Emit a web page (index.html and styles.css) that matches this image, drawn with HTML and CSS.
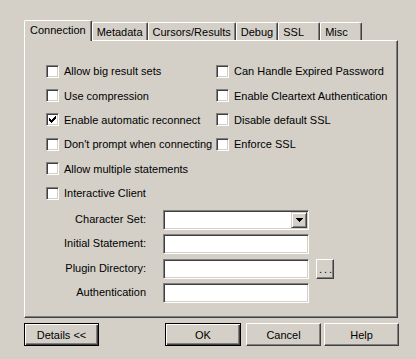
FILE: index.html
```html
<!DOCTYPE html>
<html lang="en">
<head>
  <meta charset="UTF-8">
  <title>Connection Options</title>
  <link rel="stylesheet" href="styles.css">
</head>
<body>
  <div class="dialog">
    <div class="tabs">
      <div class="tab active">Connection</div>
      <div class="tab">Metadata</div>
      <div class="tab">Cursors/Results</div>
      <div class="tab">Debug</div>
      <div class="tab">SSL</div>
      <div class="tab">Misc</div>
    </div>

    <div class="panel">
      <div class="options">
        <label class="check"><span class="box"></span>Allow big result sets</label>
        <label class="check"><span class="box"></span>Can Handle Expired Password</label>
        <label class="check"><span class="box"></span>Use compression</label>
        <label class="check"><span class="box"></span>Enable Cleartext Authentication</label>
        <label class="check"><span class="box">
          <svg width="7" height="7" viewBox="0 0 7 7"><path d="M0 2h1v1h1v1h1v-1h1v-1h1v-1h1v-1h1v3h-1v1h-1v1h-1v1h-1v1h-1v-1h-1v-1h-1v-1h-1z" fill="#000"/></svg>
        </span>Enable automatic reconnect</label>
        <label class="check"><span class="box"></span>Disable default SSL</label>
        <label class="check"><span class="box"></span>Don't prompt when connecting</label>
        <label class="check"><span class="box"></span>Enforce SSL</label>
        <label class="check"><span class="box"></span>Allow multiple statements</label>
        <span></span>
        <label class="check"><span class="box"></span>Interactive Client</label>
      </div>

      <div class="fields">
        <span class="field-label">Character Set:</span>
        <div class="field combo">
          <span class="combo-btn">
            <svg width="7" height="4" viewBox="0 0 7 4"><path d="M0 0h7v1h-1v1h-1v1h-1v1h-1v-1h-1v-1h-1v-1h-1z" fill="#000"/></svg>
          </span>
        </div>
        <span></span>

        <span class="field-label">Initial Statement:</span>
        <div class="field"></div>
        <span></span>

        <span class="field-label">Plugin Directory:</span>
        <div class="field"></div>
        <button class="browse">...</button>

        <span class="field-label">Authentication</span>
        <div class="field"></div>
        <span></span>
      </div>
    </div>

    <div class="buttons">
      <button class="btn default details">Details &lt;&lt;</button>
      <button class="btn default ok">OK</button>
      <button class="btn cancel">Cancel</button>
      <button class="btn">Help</button>
    </div>
  </div>
</body>
</html>
```

FILE: styles.css
```css
:root {
  --face: #d4d0c8;
  --light: #ffffff;
  --shadow: #808080;
  --dark: #404040;
}

* {
  box-sizing: border-box;
  margin: 0;
  padding: 0;
}

body {
  background: var(--face);
  font-family: "Liberation Sans", Arial, sans-serif;
  font-size: 11px;
  color: #000;
}

.dialog {
  width: 375px;
  margin: 20px 0 0 24px;
}

/* tab strip */
.tabs {
  display: flex;
  align-items: flex-end;
  height: 20px;
}

.tab {
  height: 18px;
  min-width: 42px;
  padding: 2px 4px 0;
  line-height: 14px;
  white-space: nowrap;
  border: 1px solid;
  border-bottom: 0;
  border-color: var(--light) var(--dark) var(--dark) var(--light);
  box-shadow: inset -1px 0 var(--shadow);
  border-radius: 2px 2px 0 0;
}

.tab.active {
  position: relative;
  z-index: 1;
  height: 21px;
  margin-bottom: -1px;
  padding: 2px 5px 0;
  background: var(--face);
}

.panel {
  width: 374px;
  height: 278px;
  border: 1px solid;
  border-color: var(--light) var(--dark) var(--dark) var(--light);
  box-shadow: inset -1px -1px var(--shadow);
  padding: 18px 0 0 21px;
}

/* checkboxes */
.options {
  display: grid;
  grid-template-columns: 170px 1fr;
  grid-auto-rows: 24.4px;
}

.check {
  display: flex;
  align-items: center;
  white-space: nowrap;
}

.box {
  display: flex;
  align-items: center;
  justify-content: center;
  width: 13px;
  height: 13px;
  margin-right: 5px;
  background: #fff;
  border: 1px solid;
  border-color: var(--shadow) var(--light) var(--light) var(--shadow);
  box-shadow: inset 1px 1px var(--dark), inset -1px -1px var(--face);
}

.box svg {
  display: block;
  shape-rendering: crispEdges;
}

/* text fields */
.fields {
  display: grid;
  grid-template-columns: 110px 146px 18px;
  grid-auto-rows: 20px;
  column-gap: 7px;
  row-gap: 4.3px;
  margin-top: 4.6px;
}

.field-label {
  align-self: center;
  text-align: right;
  padding: 0 10px 2px 0;
  white-space: nowrap;
}

.field {
  background: #fff;
  border: 1px solid;
  border-color: var(--shadow) var(--light) var(--light) var(--shadow);
  box-shadow: inset 1px 1px var(--dark), inset -1px -1px var(--face);
}

.combo {
  display: flex;
  justify-content: flex-end;
  padding: 1px;
}

.combo-btn {
  display: flex;
  align-items: center;
  justify-content: center;
  width: 16px;
  height: 16px;
  background: var(--face);
  border: 1px solid;
  border-color: var(--face) var(--dark) var(--dark) var(--face);
  box-shadow: inset 1px 1px var(--light), inset -1px -1px var(--shadow);
}

.combo-btn svg {
  display: block;
  shape-rendering: crispEdges;
}

/* raised buttons */
button {
  font: inherit;
  color: #000;
  background: var(--face);
  border: 1px solid;
  border-color: var(--light) var(--dark) var(--dark) var(--light);
  box-shadow: inset -1px -1px var(--shadow), inset 1px 1px var(--face);
}

.browse {
  width: 18px;
  height: 20px;
  padding-left: 2px;
  letter-spacing: 2px;
  line-height: 16px;
}

.buttons {
  display: flex;
  margin-top: 5px;
}

.btn {
  width: 75px;
  height: 23px;
}

.btn.default {
  border-color: #000;
  box-shadow: inset 1px 1px var(--light), inset -1px -1px var(--dark), inset -2px -2px var(--shadow);
}

.details {
  margin-right: 66px;
}

.ok {
  width: 76px;
  margin-right: 5px;
}

.cancel {
  margin-right: 3px;
}
```
